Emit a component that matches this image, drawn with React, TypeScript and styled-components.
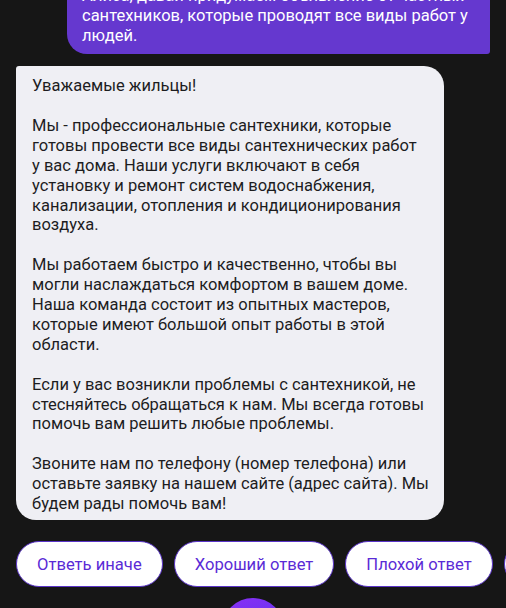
import React from "react";
import styled, { createGlobalStyle } from "styled-components";

const Global = createGlobalStyle`
  html, body { margin: 0; padding: 0; background: #161616; }
  body { font-family: Roboto, "Noto Sans", sans-serif; }
`;

const Screen = styled.div`
  height: 100vh;
  display: flex;
  flex-direction: column;
  overflow: hidden;
  background: #161616;
`;

const Messages = styled.div`
  flex: 1;
  min-height: 0;
  overflow: hidden;
  display: flex;
  flex-direction: column;
  justify-content: flex-end;
  gap: 12px;
  padding: 0 16px;
`;

const Bubble = styled.div<{ $mine?: boolean }>`
  flex-shrink: 0;
  box-sizing: border-box;
  font-size: 16.5px;
  line-height: 19.9px;
  white-space: pre;
  ${(p) =>
    p.$mine
      ? `
    align-self: flex-end;
    width: 423px;
    background: #6538cf;
    color: #ffffff;
    padding: 10px 16px 8px 15px;
    border-radius: 20px 20px 3px 20px;
  `
      : `
    align-self: flex-start;
    width: 428px;
    background: #efeff4;
    color: #1d1d1f;
    padding: 10px 16px 6px;
    border-radius: 3px 20px 20px 20px;
  `}
`;

const Suggestions = styled.div`
  display: flex;
  gap: 11px;
  padding: 21px 0 0 16px;
  flex-shrink: 0;
`;

const Chip = styled.button`
  flex-shrink: 0;
  height: 46px;
  padding: 0 20px;
  border-radius: 23px;
  background: #ffffff;
  border: 1px solid #5a34c8;
  color: #5a2bd6;
  font-family: Roboto, "Noto Sans", sans-serif;
  font-size: 16.6px;
  white-space: nowrap;
`;

const Footer = styled.div`
  flex-shrink: 0;
  height: 21px;
  display: flex;
  justify-content: center;
  padding-top: 11px;
  box-sizing: border-box;
`;

const Orb = styled.div`
  flex-shrink: 0;
  width: 62px;
  height: 62px;
  border-radius: 50%;
  background: linear-gradient(160deg, #8a2ff5 0%, #6a34f0 50%, #5138ea 100%);
`;

const userText = `Алиса, давай придумаем объявление от частных
сантехников, которые проводят все виды работ у
людей.`;

const botText = `Уважаемые жильцы!

Мы - профессиональные сантехники, которые
готовы провести все виды сантехнических работ
у вас дома. Наши услуги включают в себя
установку и ремонт систем водоснабжения,
канализации, отопления и кондиционирования
воздуха.

Мы работаем быстро и качественно, чтобы вы
могли наслаждаться комфортом в вашем доме.
Наша команда состоит из опытных мастеров,
которые имеют большой опыт работы в этой
области.

Если у вас возникли проблемы с сантехникой, не
стесняйтесь обращаться к нам. Мы всегда готовы
помочь вам решить любые проблемы.

Звоните нам по телефону (номер телефона) или
оставьте заявку на нашем сайте (адрес сайта). Мы
будем рады помочь вам!`;

export default function App() {
  return (
    <>
      <Global />
      <Screen>
        <Messages>
          <Bubble $mine>{userText}</Bubble>
          <Bubble>{botText}</Bubble>
        </Messages>
        <Suggestions>
          <Chip>Ответь иначе</Chip>
          <Chip>Хороший ответ</Chip>
          <Chip>Плохой ответ</Chip>
          <Chip>Продолжи</Chip>
        </Suggestions>
        <Footer>
          <Orb />
        </Footer>
      </Screen>
    </>
  );
}
